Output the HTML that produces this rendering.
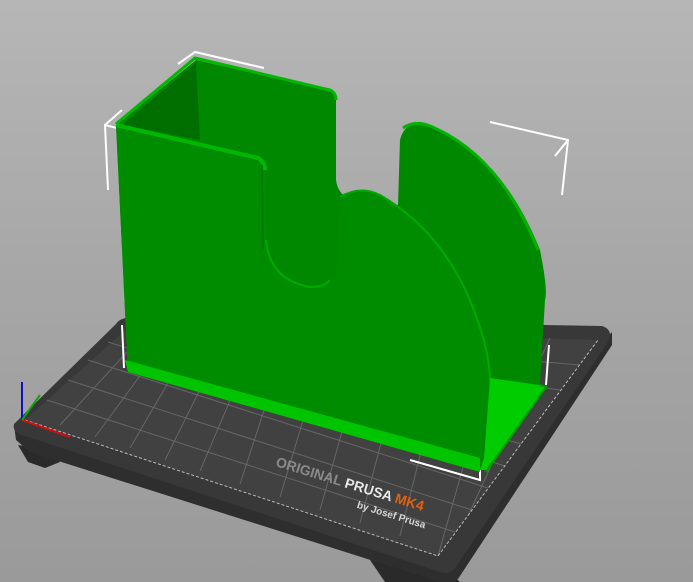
<!DOCTYPE html>
<html><head><meta charset="utf-8"><style>
html,body{margin:0;padding:0;width:693px;height:582px;overflow:hidden}
body{background:linear-gradient(#b6b6b6,#a6a6a6 50%,#9a9a9a)}
svg{position:absolute;left:0;top:0}
text{font-family:"Liberation Sans",sans-serif;font-weight:bold}
</style></head><body>
<svg width="693" height="582" viewBox="0 0 693 582">
<!-- feet -->
<path d="M18,445 L28,462 L45,468 L60,462 L50,450 Z" fill="#2a2a2a"/>
<path d="M370,560 L385,582 L460,582 L440,565 Z" fill="#2a2a2a"/>
<!-- bed side -->
<path d="M14,425 L16,440 L30,452 L440,582 L456,582 L612,345 L612,332 L600,345 L445,572 Z" fill="#2e2e2e"/>
<!-- bed top -->
<path d="M14,424 Q12,432 22,435 L440,572 Q450,575 455,568 L608,342 Q614,330 602,326 L128,318 Q120,318 116,324 Z" fill="#383838"/>
<!-- grid area -->
<path d="M25,420 L438,556 L598,340 L130,326 Z" fill="#414141"/>
<g stroke="#666" stroke-width="1" fill="none">
<path d="M47,400 L455,532 M68,380 L472,510 M88,360 L488,488 M108,342 L505,466 M127,332 L521,444 M130,327 L560,390 M130,327 L580,365"/>
<path d="M60,425 L150,327 M95,437 L175,328 M130,448 L200,328 M165,460 L230,329 M200,471 L260,330 M240,484 L290,331 M280,497 L330,331 M320,510 L370,332 M360,523 L410,333 M400,536 L450,335 M438,556 L500,336 M550,338 L468,516"/>
</g>
<path d="M25,420 L438,556 L598,340" stroke="#bbb" stroke-width="1" fill="none" stroke-dasharray="3,2"/>
<!-- axes -->
<path d="M22,420 L22,382" stroke="#1010c0" stroke-width="2"/>
<path d="M22,420 L70,437" stroke="#d01010" stroke-width="2"/>
<path d="M22,420 L40,395" stroke="#10a010" stroke-width="2"/>
<!-- logo text -->
<g transform="translate(275,466) rotate(17)">
<text x="0" y="0" font-size="14" fill="#8a8a8a">ORIGINAL <tspan fill="#e8e8e8">PRUSA</tspan> <tspan fill="#e06010">MK4</tspan></text>
<text x="90" y="16" font-size="10" fill="#d8d8d8">by Josef Prusa</text>
</g>
<!-- bounding box lines -->
<g stroke="#fff" stroke-width="2" fill="none">
<path d="M108,190 L105,125 L176,143 M105,125 L122,110"/>
<path d="M178,64 L195,52 L264,68"/>
<path d="M490,122 L568,140 L562,195 M568,140 L555,156"/>
<path d="M415,205 L498,225 L494,283 M498,225 L512,210"/>
<path d="M122,325 L124,368"/>
<path d="M549,345 L546,385"/>
<path d="M480,420 L480,480 L410,460"/>
</g>
<!-- back fill -->
<path d="M196,60 L330,90 Q336,93 336,100 L336,180 Q338,195 350,198 L398,205 L400,140 Q405,120 425,125 Q500,150 540,250 Q548,290 545,300 L540,385 L480,470 L128,372 L116,125 Z" fill="#008800"/>
<path d="M122,125 L196,63 L200,140 Z" fill="#006f00"/>
<path d="M403,128 Q415,120 430,126 Q500,155 538,250" stroke="#00b400" stroke-width="3" fill="none"/>
<!-- front wall -->
<path d="M116,125 L258,158 Q265,162 265,170 L266,250 Q275,280 310,285 Q330,286 336,278 L340,197 Q360,185 380,195 Q440,230 470,300 Q490,350 490,380 L480,470 L128,372 Z" fill="#008c00"/>
<path d="M116,125 L258,158 Q265,162 265,170" stroke="#00b800" stroke-width="4" fill="none"/>
<path d="M116,124 L195,58 L330,90 Q336,93 336,100" stroke="#00b800" stroke-width="3" fill="none"/>
<path d="M266,240 Q270,280 310,287 Q325,287 330,280" stroke="#00aa00" stroke-width="2" fill="none"/>
<path d="M340,197 Q360,185 380,195 Q440,230 470,300 Q490,350 490,380" stroke="#00aa00" stroke-width="2" fill="none"/>
<path d="M262,165 L263,250" stroke="#007a00" stroke-width="2"/>
<!-- base strip -->
<path d="M125,360 L480,458 L480,472 L128,372 Z" fill="#00c400"/>
<path d="M490,378 L546,386 L486,470 L480,470 L484,458 Z" fill="#00cc00"/>
<path d="M540,385 L546,387 L486,472" stroke="#00a000" stroke-width="2" fill="none"/>
</svg>
</body></html>
